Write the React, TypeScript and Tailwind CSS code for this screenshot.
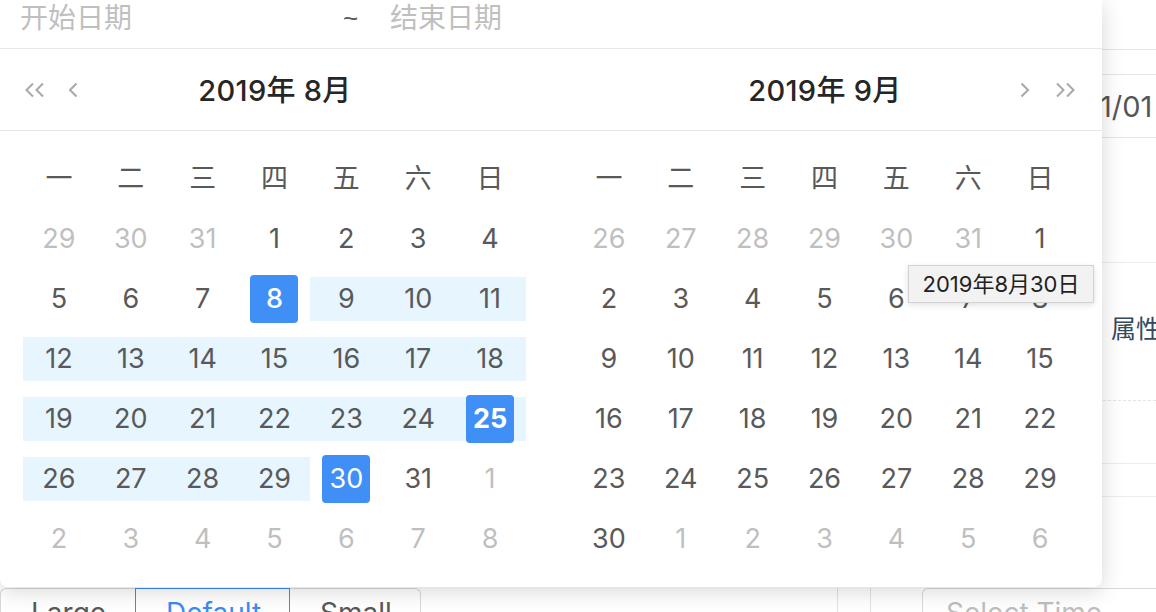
import React from "react";

type Cell = { d: number; muted?: boolean; band?: boolean; box?: "start" | "today" | "end" };

const left: Cell[][] = [
  [{ d: 29, muted: true }, { d: 30, muted: true }, { d: 31, muted: true }, { d: 1 }, { d: 2 }, { d: 3 }, { d: 4 }],
  [{ d: 5 }, { d: 6 }, { d: 7 }, { d: 8, box: "start" }, { d: 9, band: true }, { d: 10, band: true }, { d: 11, band: true }],
  [12, 13, 14, 15, 16, 17, 18].map((d) => ({ d, band: true })),
  [
    ...[19, 20, 21, 22, 23, 24].map((d) => ({ d, band: true })),
    { d: 25, band: true, box: "today" as const },
  ],
  [
    ...[26, 27, 28, 29].map((d) => ({ d, band: true })),
    { d: 30, box: "end" as const },
    { d: 31 },
    { d: 1, muted: true },
  ],
  [2, 3, 4, 5, 6, 7, 8].map((d) => ({ d, muted: true })),
];

const right: Cell[][] = [
  [...[26, 27, 28, 29, 30, 31].map((d) => ({ d, muted: true })), { d: 1 }],
  [2, 3, 4, 5, 6, 7, 8].map((d) => ({ d })),
  [9, 10, 11, 12, 13, 14, 15].map((d) => ({ d })),
  [16, 17, 18, 19, 20, 21, 22].map((d) => ({ d })),
  [23, 24, 25, 26, 27, 28, 29].map((d) => ({ d })),
  [{ d: 30 }, ...[1, 2, 3, 4, 5, 6].map((d) => ({ d, muted: true }))],
];

const weekdays = ["一", "二", "三", "四", "五", "六", "日"];

function DayCell({ c }: { c: Cell }) {
  const text = c.muted ? "text-[#bfbfbf]" : "text-[#595959]";
  const inner = c.box ? (
    <div
      className={`w-[48px] h-[48px] shrink-0 rounded-[4px] bg-[#3f8ff7] text-white flex items-center justify-center ${
        c.box === "today" ? "font-bold" : c.box === "start" ? "font-medium" : ""
      }`}
    >
      {c.d}
    </div>
  ) : (
    <span className={text}>{c.d}</span>
  );
  return (
    <div className="h-[60px] flex items-center">
      <div
        className={`w-full h-[44px] flex items-center justify-center ${c.band ? "bg-[#e6f5fe]" : ""}`}
      >
        {inner}
      </div>
    </div>
  );
}

function Month({ rows }: { rows: Cell[][] }) {
  return (
    <div className="w-[550px] pt-[18px] pl-[23px]">
      <div className="w-[503px] grid grid-cols-7 text-[27px]">
        {weekdays.map((w) => (
          <div key={w} className="h-[60px] flex items-center justify-center text-[#595959] text-[27px]">
            {w}
          </div>
        ))}
        {rows.flat().map((c, i) => (
          <DayCell key={i} c={c} />
        ))}
      </div>
    </div>
  );
}

const Chev = ({ dir }: { dir: "l" | "r" }) => (
  <svg width="10" height="16" viewBox="0 0 10 16">
    <path
      d={dir === "l" ? "M8.5 1.5 L2 8 L8.5 14.5" : "M1.5 1.5 L8 8 L1.5 14.5"}
      stroke="#a8a8a8"
      strokeWidth="2"
      fill="none"
    />
  </svg>
);

const DChev = ({ dir }: { dir: "l" | "r" }) => (
  <svg width="21" height="16" viewBox="0 0 21 16">
    <path
      d={
        dir === "l"
          ? "M9 1.5 L2.5 8 L9 14.5 M19 1.5 L12.5 8 L19 14.5"
          : "M2 1.5 L8.5 8 L2 14.5 M12 1.5 L18.5 8 L12 14.5"
      }
      stroke="#a8a8a8"
      strokeWidth="2"
      fill="none"
    />
  </svg>
);

export default function App() {
  return (
    <div className="relative w-[1156px] h-[612px] overflow-hidden bg-white [font-family:Inter,'Noto_Sans_CJK_SC',sans-serif]">
      {/* page underneath */}
      <div className="flex flex-col">
        <div className="h-[50px] border-b border-[#e4e4e4]" />
        <div className="h-[25px] border-b border-[#e4e4e4]" />
        <div className="h-[63px] border-b border-[#e4e4e4] flex items-center pl-[1100px] text-[29px] text-[#555] leading-none whitespace-nowrap">
          1/01
        </div>
        <div className="h-[125px] border-b border-[#ececec]" />
        <div className="h-[138px] border-b border-dashed border-[#e4e4e4] flex items-center pl-[1111px] text-[25px] text-[#34495e] pb-[4px] whitespace-nowrap">
          属性
        </div>
        <div className="h-[63px] border-b border-[#ececec]" />
        <div className="h-[33px] border-b border-[#ececec]" />
        <div className="h-[91px]" />
        <div className="flex h-[64px] text-[28px] leading-[40px] text-[#595959] whitespace-nowrap">
          <div className="w-[135px] border-l border-t border-[#d9d9d9] rounded-tl-[6px] pl-[30px] pt-[4px]">Large</div>
          <div className="w-[155px] border border-[#3c8cf5] pl-[30px] pt-[4px] text-[#3c8cf5]">Default</div>
          <div className="w-[131px] border-r border-t border-[#d9d9d9] rounded-tr-[6px] pl-[30px] pt-[4px]">Small</div>
          <div className="w-[416px]" />
          <div className="w-[34px] border-l border-r border-[#e2e2e2]" />
          <div className="w-[51px]" />
          <div className="flex-1 border-l border-t border-[#d9d9d9] rounded-tl-[6px] pl-[23px] pt-[4px] text-[#bfbfbf]">
            Select Time
          </div>
        </div>
      </div>

      {/* range picker popup */}
      <div className="absolute left-0 top-0 w-[1102px] h-[587px] bg-white rounded-b-[8px] shadow-[0_4px_22px_rgba(0,0,0,0.16)] flex flex-col">
        <div className="h-[49px] shrink-0 border-b border-[#e8e8e8] flex items-start text-[28px] leading-[37px] text-[#bfbfbf]">
          <span className="ml-[20px] w-[323px]">开始日期</span>
          <span className="w-[47px] text-[#595959] [font-family:'Liberation_Sans',sans-serif] text-[26px]">~</span>
          <span>结束日期</span>
        </div>
        <div className="h-[82px] shrink-0 border-b border-[#e8e8e8] flex">
          <div className="w-[550px] grid grid-cols-[1fr_auto_1fr] items-center">
            <div className="flex items-center pl-[24px] gap-[23px]">
              <DChev dir="l" />
              <Chev dir="l" />
            </div>
            <div className="text-[29px] font-medium text-[#262626] pt-[3px] tracking-[0.3px]">2019年 8月</div>
            <div />
          </div>
          <div className="w-[550px] grid grid-cols-[1fr_auto_1fr] items-center">
            <div />
            <div className="text-[29px] font-medium text-[#262626] pt-[3px] tracking-[0.3px]">2019年 9月</div>
            <div className="flex items-center justify-end pr-[24px] gap-[25px]">
              <Chev dir="r" />
              <DChev dir="r" />
            </div>
          </div>
        </div>
        <div className="flex">
          <Month rows={left} />
          <Month rows={right} />
        </div>
      </div>

      {/* native tooltip */}
      <div className="absolute left-[908px] top-[265px] w-[186px] h-[38px] bg-[#f2f2f2] border border-[#d2d2d2] shadow-[0_2px_6px_rgba(0,0,0,0.12)] flex items-center justify-center text-[22px] text-[#222]">
        2019年8月30日
      </div>
    </div>
  );
}
